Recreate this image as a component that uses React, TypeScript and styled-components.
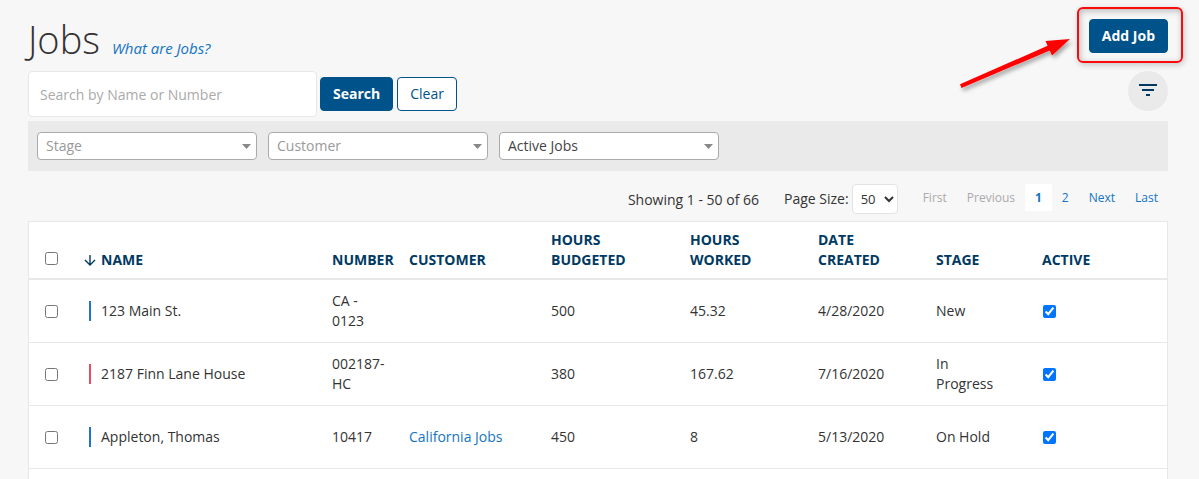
import React, { useState } from "react";
import styled, { createGlobalStyle } from "styled-components";

const GlobalStyle = createGlobalStyle`
  *, *::before, *::after { box-sizing: border-box; }
  body {
    margin: 0;
    background: #f7f7f7;
    color: #333;
    font: 14px/20px "Open Sans", "Noto Sans", sans-serif;
  }
  button, input, select { font: inherit; }
  a { color: #1474c4; text-decoration: none; }
`;

const Page = styled.main`
  display: flex;
  flex-direction: column;
  min-height: 100vh;
  padding: 19px 31px 0 28px;
`;

const Header = styled.header`
  display: flex;
  justify-content: space-between;
  align-items: flex-start;
  height: 52px;
`;

const Heading = styled.div`
  display: flex;
  align-items: baseline;
  gap: 12px;
`;

const Title = styled.h1`
  margin: 0;
  font-size: 38px;
  line-height: 40px;
  font-weight: 300;
`;

const HelpLink = styled.a`
  font-size: 15px;
  font-style: italic;
`;

const Button = styled.button<{ $outline?: boolean }>`
  height: 34px;
  padding: 0 12px;
  border: 1px solid #00528a;
  border-radius: 4px;
  background: ${(p) => (p.$outline ? "#fff" : "#00528a")};
  color: ${(p) => (p.$outline ? "#00528a" : "#fff")};
  font-weight: ${(p) => (p.$outline ? 400 : 700)};
  white-space: nowrap;
`;

const Callout = styled.div`
  position: relative;
`;

const CalloutFrame = styled.span`
  position: absolute;
  inset: -12px -15px -10px -12px;
  border: 2px solid #fb0a0e;
  border-radius: 6px;
  box-shadow: 1px 2px 6px rgba(0, 0, 0, 0.2), inset 1px 2px 6px rgba(0, 0, 0, 0.25);
  pointer-events: none;
`;

const CalloutArrow = styled.svg`
  position: absolute;
  top: 13px;
  right: 93px;
  pointer-events: none;
`;

const SearchRow = styled.form`
  display: flex;
  align-items: flex-start;
`;

const SearchBox = styled.input`
  width: 289px;
  height: 46px;
  padding: 0 11px;
  border: 1px solid #e8e8e8;
  border-radius: 4px;
  background: #fff;
  color: #333;
  &::placeholder { color: #aaa; opacity: 1; }
`;

const SearchActions = styled.div`
  display: flex;
  gap: 4px;
  padding: 6px 0 0 3px;
`;

const FilterToggle = styled.button`
  display: flex;
  align-items: center;
  justify-content: center;
  width: 40px;
  height: 40px;
  margin-left: auto;
  padding: 0;
  border: 0;
  border-radius: 50%;
  background: #eaeaea;
`;

const FilterBar = styled.div`
  display: flex;
  flex-wrap: wrap;
  gap: 11px;
  margin-top: 4px;
  padding: 11px 9px;
  background: #eaeaea;
`;

const FilterField = styled.div`
  display: grid;
  align-items: center;
  width: 220px;
  & > * { grid-area: 1 / 1; }
  & > svg { justify-self: end; margin-right: 6px; pointer-events: none; }
`;

const FilterSelect = styled.select<{ $muted?: boolean }>`
  appearance: none;
  width: 100%;
  height: 28px;
  padding: 0 24px 0 8px;
  border: 1px solid #aaa;
  border-radius: 4px;
  background: #fff;
  color: ${(p) => (p.$muted ? "#999" : "#444")};
`;

const Pager = styled.div`
  display: flex;
  justify-content: flex-end;
  align-items: flex-start;
  height: 50px;
  padding-top: 13px;
`;

const Showing = styled.span`
  margin-right: 25px;
  line-height: 32px;
`;

const PageSizeLabel = styled.label`
  margin-right: 3px;
  line-height: 30px;
`;

const PageSize = styled.select`
  width: 46px;
  height: 30px;
  margin-right: 15px;
  padding: 0 0 0 4px;
  border: 1px solid #e3e3e3;
  border-radius: 4px;
  background: #fff;
  color: #333;
  font-size: 13px;
`;

const PageNav = styled.nav`
  display: flex;
  font-size: 12px;
  line-height: 27px;
`;

const PageItem = styled.a<{ $current?: boolean; $off?: boolean }>`
  padding: 0 10px;
  background: ${(p) => (p.$current ? "#fff" : "transparent")};
  color: ${(p) => (p.$off ? "#aaa" : "#1474c4")};
  font-weight: ${(p) => (p.$current ? 700 : 400)};
`;

const TableCard = styled.section`
  flex: 1;
  border: 1px solid #e8e8e8;
  border-bottom: 0;
  background: #fff;
`;

const Table = styled.table`
  width: 100%;
  table-layout: fixed;
  border-collapse: separate;
  border-spacing: 0;
`;

const Col = styled.col<{ $w?: number }>`
  width: ${(p) => (p.$w ? p.$w + "px" : "auto")};
`;

const Th = styled.th`
  padding: 8px;
  border-bottom: 2px solid #e8e8e8;
  color: #003a63;
  font-weight: 700;
  text-align: left;
  text-transform: uppercase;
  vertical-align: bottom;
  white-space: pre-line;
`;

const Td = styled.td<{ $narrow?: boolean }>`
  height: 63px;
  padding: 11px ${(p) => (p.$narrow ? 36 : 8)}px 11px 8px;
  border-bottom: 1px solid #e8e8e8;
  vertical-align: middle;
`;

const SortLabel = styled.span`
  display: flex;
  align-items: center;
  gap: 5px;
`;

const JobName = styled.span<{ $tone: string }>`
  display: block;
  margin-left: 5px;
  padding-left: 10px;
  border-left: 2px solid ${(p) => p.$tone};
`;

const Check = styled.input`
  display: block;
  width: 13px;
  height: 13px;
  margin: 0 0 0 8px;
  accent-color: #0075ff;
`;

const HeadCheck = styled(Check)`
  margin-bottom: 5px;
`;

const ActiveCheck = styled(Check)`
  margin-left: 1px;
`;

const headings = ["Number", "Customer", "Hours\nBudgeted", "Hours\nWorked", "Date\nCreated", "Stage", "Active"];
const columnWidths = [47, undefined, 77, 142, 139, 128, 118, 106, 133];

const jobs = [
  { name: "123 Main St.", tone: "#1e73cc", number: "CA - 0123", customer: "", budgeted: "500", worked: "45.32", created: "4/28/2020", stage: "New" },
  { name: "2187 Finn Lane House", tone: "#ee4b60", number: "002187-HC", customer: "", budgeted: "380", worked: "167.62", created: "7/16/2020", stage: "In Progress" },
  { name: "Appleton, Thomas", tone: "#1e73cc", number: "10417", customer: "California Jobs", budgeted: "450", worked: "8", created: "5/13/2020", stage: "On Hold" },
];

function Filter({ label, options, muted }: { label: string; options: string[]; muted?: boolean }) {
  return (
    <FilterField>
      <FilterSelect aria-label={label} $muted={muted}>
        {options.map((o) => <option key={o}>{o}</option>)}
      </FilterSelect>
      <svg width="9" height="5" viewBox="0 0 9 5" aria-hidden="true">
        <path d="M0 0h9L4.5 5z" fill="#888" />
      </svg>
    </FilterField>
  );
}

export default function App() {
  const [query, setQuery] = useState("");
  return (
    <>
      <GlobalStyle />
      <Page>
        <Header>
          <Heading>
            <Title>Jobs</Title>
            <HelpLink href="#help">What are Jobs?</HelpLink>
          </Heading>
          <Callout>
            <Button type="button">Add Job</Button>
            <CalloutFrame />
            <CalloutArrow width="120" height="66" viewBox="0 0 120 66" aria-hidden="true">
              <defs>
                <filter id="arrowShadow" x="-20%" y="-20%" width="140%" height="150%">
                  <feDropShadow dx="2" dy="3" stdDeviation="2" floodOpacity="0.35" />
                </filter>
              </defs>
              <path d="M5 52.3L92.6 13.8L90.5 9L115 7L97 23.5L94.8 18.4L6.5 56z" fill="#fe0000" filter="url(#arrowShadow)" />
            </CalloutArrow>
          </Callout>
        </Header>

        <SearchRow onSubmit={(e) => e.preventDefault()}>
          <SearchBox
            type="text"
            aria-label="Search by Name or Number"
            placeholder="Search by Name or Number"
            value={query}
            onChange={(e) => setQuery(e.target.value)}
          />
          <SearchActions>
            <Button type="submit">Search</Button>
            <Button type="button" $outline onClick={() => setQuery("")}>Clear</Button>
          </SearchActions>
          <FilterToggle type="button" aria-label="Filters">
            <svg width="18" height="14" viewBox="0 0 18 14" aria-hidden="true">
              <path d="M0 0h18v2H0zM3 5h12v2H3zM7 10h4v2H7z" fill="#003a63" />
            </svg>
          </FilterToggle>
        </SearchRow>

        <FilterBar>
          <Filter label="Stage" options={["Stage"]} muted />
          <Filter label="Customer" options={["Customer"]} muted />
          <Filter label="Status" options={["Active Jobs"]} />
        </FilterBar>

        <Pager>
          <Showing>Showing 1 - 50 of 66</Showing>
          <PageSizeLabel htmlFor="page-size">Page Size:</PageSizeLabel>
          <PageSize id="page-size">
            <option>50</option>
          </PageSize>
          <PageNav aria-label="Pages">
            <PageItem $off>First</PageItem>
            <PageItem $off>Previous</PageItem>
            <PageItem href="#1" $current aria-current="page">1</PageItem>
            <PageItem href="#2">2</PageItem>
            <PageItem href="#next">Next</PageItem>
            <PageItem href="#last">Last</PageItem>
          </PageNav>
        </Pager>

        <TableCard>
          <Table>
            <colgroup>
              {columnWidths.map((w, i) => <Col key={i} $w={w} />)}
            </colgroup>
            <thead>
              <tr>
                <Th><HeadCheck type="checkbox" aria-label="Select all jobs" /></Th>
                <Th aria-sort="descending">
                  <SortLabel>
                    <svg width="12" height="12" viewBox="0 0 12 12" fill="none" stroke="#003a63" strokeWidth="1.4" aria-hidden="true">
                      <path d="M6 1v10M1 6l5 5l5-5" />
                    </svg>
                    Name
                  </SortLabel>
                </Th>
                {headings.map((h) => <Th key={h}>{h}</Th>)}
              </tr>
            </thead>
            <tbody>
              {jobs.map((job) => (
                <tr key={job.name}>
                  <Td><Check type="checkbox" aria-label={"Select " + job.name} /></Td>
                  <Td><JobName $tone={job.tone}>{job.name}</JobName></Td>
                  <Td>{job.number}</Td>
                  <Td>{job.customer && <a href="#customer">{job.customer}</a>}</Td>
                  <Td>{job.budgeted}</Td>
                  <Td>{job.worked}</Td>
                  <Td>{job.created}</Td>
                  <Td $narrow>{job.stage}</Td>
                  <Td><ActiveCheck type="checkbox" defaultChecked aria-label={job.name + " is active"} /></Td>
                </tr>
              ))}
            </tbody>
          </Table>
        </TableCard>
      </Page>
    </>
  );
}
